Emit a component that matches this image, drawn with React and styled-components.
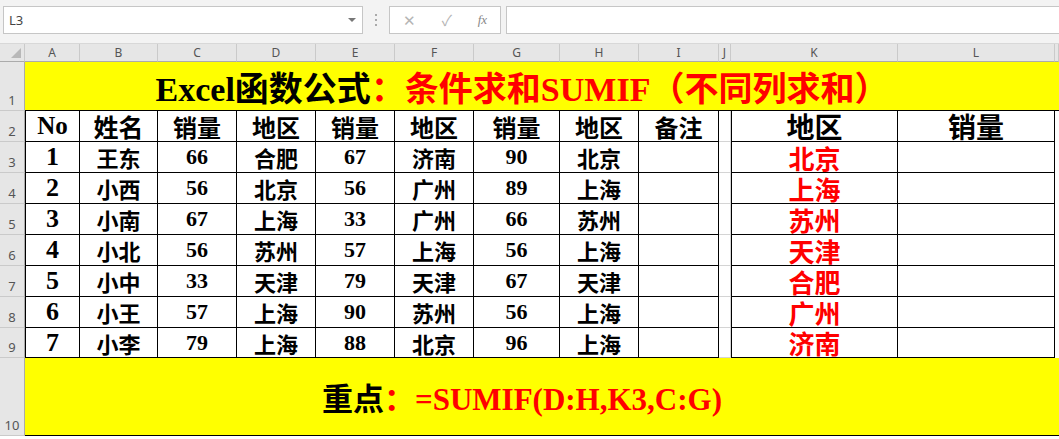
import React from "react";
import styled, { createGlobalStyle } from "styled-components";

const Global = createGlobalStyle`
  html,body{margin:0;padding:0;background:#fff;overflow:hidden;}
  *{box-sizing:border-box;}
`;
const SERIF = `"Liberation Serif","Noto Sans CJK SC",serif`;
const UI = `"Noto Sans","Noto Sans CJK SC",sans-serif`;

const Bar = styled.div`
  height:44px;background:#f3f3f3;display:flex;align-items:center;gap:0;padding:0 0 4px 3px;
  font-family:${UI};border-bottom:1px solid #d8d8d8;
`;
const NameBox = styled.div`
  width:360px;height:28px;background:#fff;border:1px solid #c6c6c6;display:flex;align-items:center;
  justify-content:space-between;padding:0 6px 0 5px;font-size:13px;color:#444;
`;
const Arrow = styled.span`width:0;height:0;border-left:4px solid transparent;border-right:4px solid transparent;border-top:4px solid #777;`;
const Dots = styled.div`
  width:26px;height:12px;display:flex;justify-content:center;
  &::before{content:"";width:2px;height:12px;background:repeating-linear-gradient(#aaa 0 2px,transparent 2px 5px);}
`;
const FxBox = styled.div`
  width:112px;height:28px;background:#fff;border:1px solid #c6c6c6;display:flex;align-items:center;justify-content:space-around;
  color:#b5b5b5;font-size:15px;
`;
const Fx = styled.span`font-family:${SERIF};font-style:italic;font-size:13px;color:#888;`;
const Formula = styled.div`flex:1;height:28px;margin-left:5px;background:#fff;border:1px solid #c6c6c6;border-right:none;`;

const Grid = styled.div`
  display:grid;
  grid-template-columns:25px 55px 78px 79px 79px 79px 79px 86px 79px 80px 12px 167px 157px 4px;
  grid-template-rows:18px 49px 31px 31px 31px 31px 31px 31px 31px 30px 78px;
  font-family:${SERIF};
`;
const ColHead = styled.div`
  background:#e6e6e6;color:#555;font-family:${UI};font-size:12px;display:flex;align-items:center;justify-content:center;
  border-right:1px solid #cacaca;border-bottom:1px solid #ababab;
`;
const Corner = styled(ColHead)`position:relative;
  &::after{content:"";position:absolute;right:3px;bottom:3px;border-left:10px solid transparent;border-bottom:10px solid #b8b8b8;}
`;
const RowHead = styled.div`
  background:#e6e6e6;color:#555;font-family:${UI};font-size:13px;display:flex;align-items:flex-end;justify-content:center;
  border-right:1px solid #ababab;border-bottom:1px solid #cacaca;padding-bottom:1px;
`;
const Banner = styled.div`
  grid-column:2 / span 13;background:#ffff00;display:flex;align-items:center;
  justify-content:center;font-weight:bold;font-size:${p=>p.$size}px;padding-right:${p=>p.$shift||0}px;
  border-bottom:1px solid #000;color:#000;
`;
const Red = styled.span`color:#f00;`;
const Cell = styled.div`
  display:flex;align-items:center;justify-content:center;font-weight:bold;white-space:nowrap;
  font-size:${p=>p.$size||22}px;color:${p=>p.$red?"#f00":"#000"};
  border-right:1px solid ${p=>p.$plain?"#d4d4d4":"#000"};
  border-bottom:1px solid ${p=>p.$plain?"#d4d4d4":"#000"};
  ${p=>p.$left?"border-left:1px solid #000;":""}
`;

const cols = ["A","B","C","D","E","F","G","H","I","J","K","L",""];
const rows = [
  ["1","王东","66","合肥","67","济南","90","北京","北京"],
  ["2","小西","56","北京","56","广州","89","上海","上海"],
  ["3","小南","67","上海","33","广州","66","苏州","苏州"],
  ["4","小北","56","苏州","57","上海","56","上海","天津"],
  ["5","小中","33","天津","79","天津","67","天津","合肥"],
  ["6","小王","57","上海","90","苏州","56","上海","广州"],
  ["7","小李","79","上海","88","北京","96","上海","济南"],
];
const heads = ["No","姓名","销量","地区","销量","地区","销量","地区","备注"];

export default function App(){
  return (<>
    <Global/>
    <Bar>
      <NameBox>L3<Arrow/></NameBox>
      <Dots/>
      <FxBox><span>✕</span><span>✓</span><Fx>fx</Fx></FxBox>
      <Formula/>
    </Bar>
    <Grid>
      <Corner/>
      {cols.map((c,i)=><ColHead key={i}>{c}</ColHead>)}
      <RowHead>1</RowHead>
      <Banner $size={34} $shift={40}>Excel函数公式<Red>：条件求和SUMIF（不同列求和）</Red></Banner>
      <RowHead>2</RowHead>
      {heads.map((h,i)=><Cell key={i} $size={i<2?25:24} $left={i===0}>{h}</Cell>)}
      <Cell $plain/>
      <Cell $size={28} $left>地区</Cell>
      <Cell $size={28}>销量</Cell>
      <Cell $plain style={{borderBottom:"none",borderRight:"none"}}/>
      {rows.map((r,ri)=>(
        <React.Fragment key={ri}>
          <RowHead>{ri+3}</RowHead>
          {r.slice(0,8).map((v,i)=><Cell key={i} $size={i===0?26:22} $left={i===0}>{v}</Cell>)}
          <Cell/>
          <Cell $plain/>
          <Cell $red $size={26} $left>{r[8]}</Cell>
          <Cell/>
          <Cell $plain style={{borderBottom:"none",borderRight:"none"}}/>
        </React.Fragment>
      ))}
      <RowHead>10</RowHead>
      <Banner $size={31} $shift={40}>重点<Red>：=SUMIF(D:H,K3,C:G)</Red></Banner>
    </Grid>
  </>);
}
